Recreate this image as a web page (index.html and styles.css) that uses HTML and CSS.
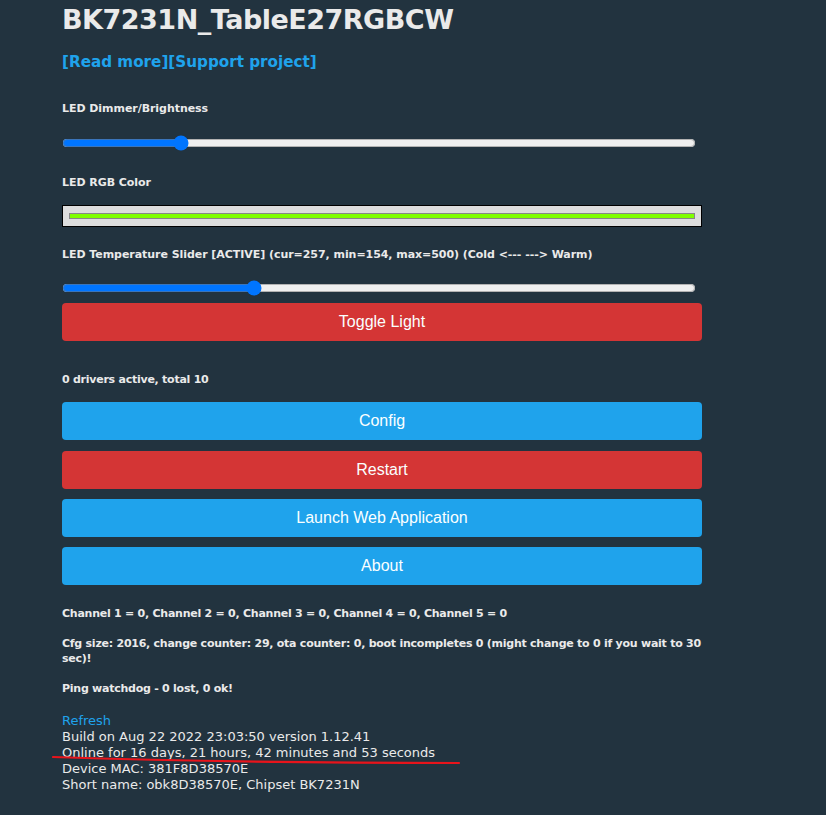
FILE: index.html
```html
<!DOCTYPE html>
<html>
<head>
<meta charset="utf-8">
<title>BK7231N_TableE27RGBCW</title>
<link rel="stylesheet" href="styles.css">
</head>
<body>
<div class="page">
  <h1 class="title">BK7231N_TableE27RGBCW</h1>
  <div class="links"><a href="#">[Read more]</a><a href="#">[Support project]</a></div>

  <div class="label lbl-dimmer">LED Dimmer/Brightness</div>
  <input class="range r-dimmer" type="range" min="0" max="100" value="18">

  <div class="label lbl-rgb">LED RGB Color</div>
  <input class="color" type="color" value="#80ff00">

  <div class="label lbl-temp">LED Temperature Slider [ACTIVE] (cur=257, min=154, max=500) (Cold &lt;--- ---&gt; Warm)</div>
  <input class="range r-temp" type="range" min="154" max="500" value="257">

  <button class="btn red toggle">Toggle Light</button>

  <div class="label tight lbl-drivers">0 drivers active, total 10</div>

  <div class="buttons">
    <button class="btn blue">Config</button>
    <button class="btn red">Restart</button>
    <button class="btn blue">Launch Web Application</button>
    <button class="btn blue">About</button>
  </div>

  <div class="label tight lbl-channel">Channel 1 = 0, Channel 2 = 0, Channel 3 = 0, Channel 4 = 0, Channel 5 = 0</div>
  <div class="label tight lbl-cfg">Cfg size: 2016, change counter: 29, ota counter: 0, boot incompletes 0 (might change to 0 if you wait to 30 sec)!</div>
  <div class="label tight lbl-ping">Ping watchdog - 0 lost, 0 ok!</div>

  <div class="info">
    <a href="#" class="refresh">Refresh</a>
    <div>Build on Aug 22 2022 23:03:50 version 1.12.41</div>
    <div>Online for 16 days, 21 hours, 42 minutes and 53 seconds</div>
    <div>Device MAC: 381F8D38570E</div>
    <div>Short name: obk8D38570E, Chipset BK7231N</div>
  </div>
</div>
<svg class="scribble" width="420" height="14" viewBox="0 0 420 14">
  <path d="M1 4 C 120 8, 260 10, 407 10" fill="none" stroke="#e8141b" stroke-width="2.2" stroke-linecap="round"/>
</svg>
</body>
</html>
```
FILE: styles.css
```css
html, body {
  margin: 0;
  padding: 0;
  background: #22333f;
}
body {
  position: relative;
  min-height: 815px;
  color: #eaeaea;
  font-family: "DejaVu Sans", Verdana, sans-serif;
}
.page {
  width: 640px;
  margin-left: 62px;
  display: flex;
  flex-direction: column;
  align-items: stretch;
}
.title {
  margin: 0;
  font-size: 27px;
  letter-spacing: -0.5px;
  line-height: 40px;
  font-weight: bold;
  color: #eaeaea;
}
.links {
  margin-top: 12px;
  margin-bottom: -1px;
  font-size: 15.2px;
  line-height: 20px;
  font-weight: bold;
}
.links a, .refresh {
  color: #1fa3ec;
  text-decoration: none;
}
.label {
  font-size: 11px;
  line-height: 16px;
  padding-top: 1px;
  margin-bottom: -1px;
  font-weight: bold;
  letter-spacing: -0.05px;
}
.label.tight {
  letter-spacing: -0.25px;
}
.lbl-dimmer { margin-top: 29px; }
.range {
  display: block;
  margin: 0;
  width: 634px;
  height: 16px;
}
.r-dimmer { margin-top: 19px; }
.lbl-rgb { margin-top: 23px; }
.color {
  display: block;
  box-sizing: border-box;
  width: 640px;
  height: 22px;
  margin: 15px 0 0 0;
  padding: 0;
  border: 1px solid #000;
  background: #dddddd;
  -webkit-appearance: none;
  appearance: none;
}
.color::-webkit-color-swatch-wrapper {
  padding: 7px 6px;
}
.color::-webkit-color-swatch {
  border: 1px solid #888;
  border-radius: 0;
}
.lbl-temp { margin-top: 19px; }
.r-temp { margin-top: 18px; }
.btn {
  display: block;
  width: 640px;
  height: 38px;
  border: 0;
  border-radius: 4px;
  color: #faffff;
  font-family: "Liberation Sans", Arial, sans-serif;
  font-size: 16px;
  padding: 0;
}
.red { background: #d43535; }
.blue { background: #1fa3ec; }
.toggle { margin-top: 7px; }
.lbl-drivers { margin-top: 30px; }
.buttons {
  margin-top: 15px;
  display: flex;
  flex-direction: column;
  gap: 10px;
}
.buttons .btn:nth-child(2) { margin-top: 1px; }
.lbl-channel { margin-top: 20px; }
.lbl-cfg { margin-top: 14px; line-height: 15px; }
.lbl-ping { margin-top: 15px; }
.info {
  margin-top: 17px;
  font-size: 13px;
  line-height: 16px;
  display: flex;
  flex-direction: column;
  align-items: flex-start;
}
.scribble {
  position: absolute;
  left: 52px;
  top: 753px;
}
```
